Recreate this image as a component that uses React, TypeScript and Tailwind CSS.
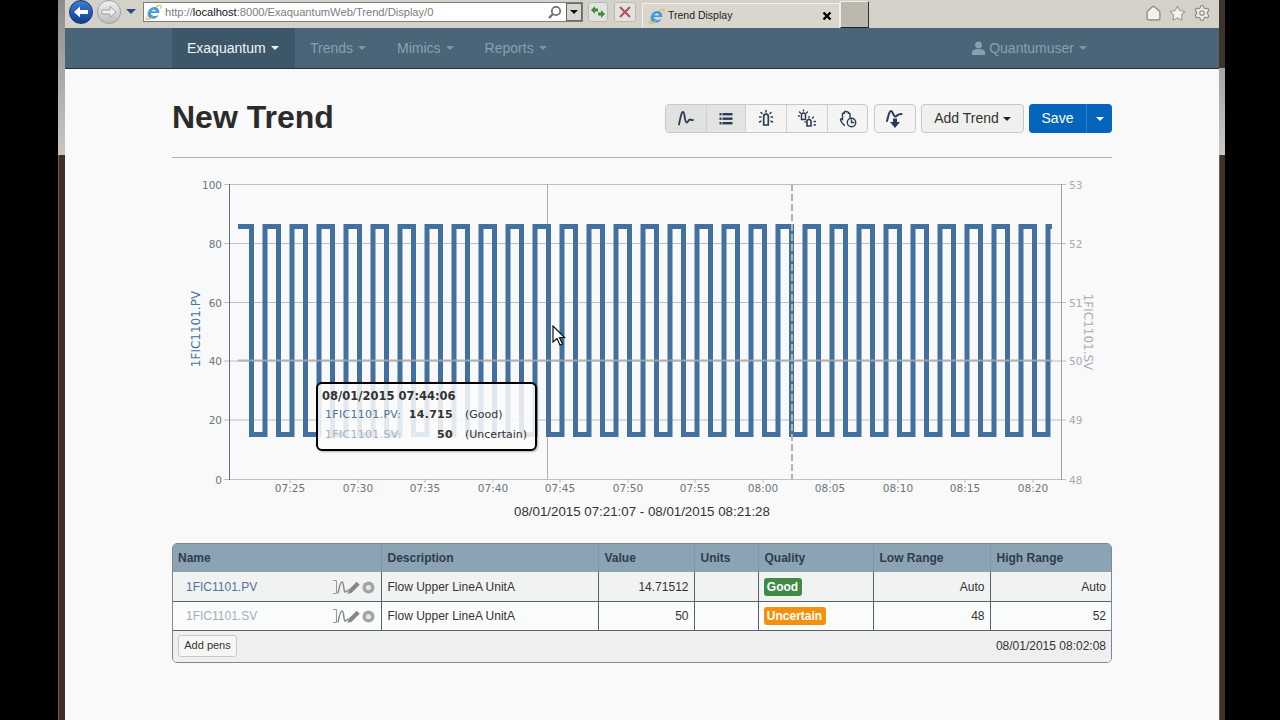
import React from "react";
import { House, Star, Settings } from "lucide-react";

const Caret = ({ className = "" }: { className?: string }) => (
  <span className={`inline-block w-0 h-0 border-x-[4px] border-x-transparent border-t-[4px] ${className}`} />
);

const Strip = ({ side }: { side: "l" | "r" }) => (
  <div className="w-full h-full flex flex-col">
    {side === "r" && <div className="h-[68px] bg-[#3f342c]" />}
    <div className={side === "l" ? "h-[155px] bg-gradient-to-b from-[#8f8c8c] to-[#c9c6c2]" : "h-[87px] bg-gradient-to-b from-[#a8a5a2] to-[#c9c6c2]"} />
    <div className="flex-1 bg-[#3f2f24] border-l border-[#6e6052]" />
  </div>
);

const IeLogo = ({ size = 16 }: { size?: number }) => (
  <svg width={size} height={size} viewBox="0 0 20 20" fill="none">
    <path d="M3 12.500C3 7 7 3.500 11 3.500s6 3 6 7H7c0 3.500 5 5 9 2-1.500 4-5 5.500-8 4.500C5 16.500 3 15 3 12.500Z" fill="#4a9bd8" />
    <path d="M7.500 8.500h5.500c-.5-2.500-4.500-2.500-5.500 0Z" fill="#f4f6f4" />
    <path d="M2 15C0 19 4 19 9 15.500M13 3.500C17 .5 20 1 18.500 5.500" stroke="#e8b93c" strokeWidth="1.400" />
  </svg>
);

const BrowserBar = () => (
  <div className="h-[28px] shrink-0 bg-[#d3d1c8] flex items-start relative">
    <div className="w-[4px]" />
    <div className="w-[24px] h-[24px] rounded-full bg-gradient-to-b from-[#3c7ed0] to-[#103f92] border border-[#17386e] flex items-center justify-center">
      <svg width="16" height="14" viewBox="0 0 16 14"><path d="M1 7 7 1.500V5h8v4H7v3.500Z" fill="#fff" /></svg>
    </div>
    <div className="ml-[4px] w-[24px] h-[24px] rounded-full bg-gradient-to-b from-[#f0f1ee] to-[#b9bec0] border border-[#9aa0a2] flex items-center justify-center">
      <svg width="16" height="14" viewBox="0 0 16 14"><path d="M15 7 9 1.500V5H1v4h8v3.500Z" fill="#eef0ee" stroke="#9aa3a8" /></svg>
    </div>
    <div className="ml-[5px] mt-[9px] flex"><Caret className="border-t-[#234e86] border-x-[5px] border-t-[5px]" /></div>
    <div className="ml-[7px] mt-[2px] w-[440px] h-[20px] bg-white border border-[#7e7e78] flex items-center pl-[1px]">
      <IeLogo size={17} />
      <span className="ml-[3px] text-[11.200px] tracking-[-0.03px] text-[#7d7d7d] font-['Liberation_Sans',sans-serif] whitespace-nowrap">
        http://<span className="text-[#111]">localhost</span>:8000/ExaquantumWeb/Trend/Display/0
      </span>
      <div className="ml-auto mr-[4px] text-[#777]">
        <svg width="15" height="15" viewBox="0 0 15 15" fill="none" stroke="#6f7272" strokeWidth="1.800"><circle cx="9" cy="6" r="4.200" /><path d="M6 9 2 13" strokeWidth="2.400" /></svg>
      </div>
      <div className="w-[16px] h-[18px] bg-[#d6d5cf] border border-[#666] flex items-center justify-center"><Caret className="border-t-[#111]" /></div>
    </div>
    <div className="ml-[5px] mt-[2px] w-[20px] h-[20px] rounded-[3px] bg-[#e2e3dc] border border-[#bbb] flex items-center justify-center">
      <svg width="16" height="14" viewBox="0 0 16 14"><path d="M1 5 5 1v2.500h3v3H5V9ZM15 9l-4 4v-2.500H8v-3h3V5Z" fill="#3c8c3c" /></svg>
    </div>
    <div className="ml-[6px] mt-[2px] w-[22px] h-[20px] rounded-[3px] bg-[#e2e3dc] border border-[#bbb] flex items-center justify-center">
      <svg width="12" height="12" viewBox="0 0 12 12"><path d="M1 1l10 10M11 1 1 11" stroke="#b5525a" strokeWidth="2.200" /></svg>
    </div>
    <div className="ml-[6px] mt-[3px] w-[198px] h-[25px] bg-[#d9d7cd] border-t border-x border-[#f1f0ea] flex items-center pl-[5px]">
      <IeLogo size={17} />
      <span className="ml-[3px] text-[10.500px] text-[#222] font-['Liberation_Sans',sans-serif] whitespace-nowrap">Trend Display</span>
      <svg className="ml-auto mr-[7px]" width="10" height="10" viewBox="0 0 10 10"><path d="M1.500 1.500l7 7M8.500 1.500l-7 7" stroke="#000" strokeWidth="2.400" /></svg>
    </div>
    <div className="mt-[1px] w-[29px] h-[27px] bg-[#bdb8ae] border border-[#eee] border-b-[#222] border-r-[#333]" />
    <div className="ml-auto flex items-center mt-[4px] mr-[8px] gap-[7px]">
      <House size={17} className="text-[#85857e] fill-[#f3f2ec]" strokeWidth={1.700} />
      <Star size={17} className="text-[#9a9a92] fill-[#f5f4ee]" strokeWidth={1.500} />
      <Settings size={18} className="text-[#8a8a84] fill-[#ecebe4]" strokeWidth={1.500} />
    </div>
  </div>
);

const NavItem = ({ label, active }: { label: string; active?: boolean }) => (
  <div className={`h-full flex items-center gap-[5px] px-[15px] text-[14px] ${active ? "bg-[#3c5769] text-[#f0f4f6]" : "text-[#8ba0ae]"}`}>
    {label}
    <Caret className={active ? "border-t-[#f0f4f6]" : "border-t-[#7f95a3]"} />
  </div>
);

const NavBar = () => (
  <div className="h-[41px] shrink-0 bg-[#4a6578] border-b border-[#24313a] flex pl-[107px] pr-[132px] font-['Liberation_Sans',sans-serif]">
    <div className="w-[123px] h-full"><NavItem label="Exaquantum" active /></div>
    <NavItem label="Trends" />
    <div className="ml-[1px]"><NavItem label="Mimics" /></div>
    <div className="ml-[1px]"><NavItem label="Reports" /></div>
    <div className="ml-auto flex items-center gap-[4px] text-[14px] text-[#8ba0ae]">
      <svg width="13" height="14" viewBox="0 0 13 14" fill="#8ba0ae"><circle cx="6.500" cy="4" r="3.400" /><path d="M0 14v-2.500C0 9 3 8 6.500 8s6.500 1 6.500 3.500V14Z" /></svg>
      <span>Quantumuser</span>
      <Caret className="ml-[1px] border-t-[#7f95a3]" />
    </div>
  </div>
);

const ic = { fill: "none", stroke: "#2b3a58", strokeWidth: 1.500, strokeLinecap: "round" as const };

const TrendIcon = () => (
  <svg width="20" height="20" viewBox="0 0 20 20" {...ic}><path d="M3 15.500C4.500 8 5.500 3 7 3c2 0 1.500 10 3.500 10.500 1.500.4 2-3 3.500-3 1 0 2 1 3 .5" strokeWidth="1.800" /></svg>
);
const ListIcon = () => (
  <svg width="20" height="20" viewBox="0 0 20 20" fill="#2b3a58">
    <rect x="3.500" y="4" width="13" height="2.400" /><rect x="3.500" y="8.500" width="13" height="2.400" /><rect x="3.500" y="13" width="13" height="2.400" />
    <rect x="5.500" y="4" width="1" height="11.500" fill="#e2e4e1" />
  </svg>
);
const LampIcon = () => (
  <svg width="20" height="20" viewBox="0 0 20 20" {...ic}>
    <path d="M7.700 16V7.500a2.300 2.300 0 0 1 4.600 0V16Z" strokeWidth="1.700" /><path d="M10 1.500v1.500M5 3.500l1 1M15 3.500l-1 1M3.500 8h1.500M15 8h1.500M3.500 13l1.500-.8M16.500 13l-1.500-.8" />
  </svg>
);
const LampsIcon = () => (
  <svg width="20" height="20" viewBox="0 0 20 20" {...ic} strokeWidth={1.300}>
    <path d="M10 17v-4.500a2 2 0 0 1 4 0V17Z" strokeWidth="1.600" />
    <path d="M4.500 10.500V6a2 2 0 0 1 4 0v4.500Z" strokeWidth="1.500" />
    <path d="M6.500 1v1M2.500 3l1 1M10.500 3l-1 1M1.500 7h1M12 7.500v1.500M16.500 8l-1 1M17 12.500h1.500M17 16h1.500M8.500 13H8" />
  </svg>
);
const HandIcon = () => (
  <svg width="20" height="20" viewBox="0 0 20 20" {...ic} strokeWidth={1.400}>
    <path d="M6.500 16.500C4 14 2.500 11.500 2.500 10.500c0-1 1.200-1 2-.2V5c0-1.300 1.800-1.300 1.900 0V3.200c0-1.300 1.900-1.300 2 0V3.500c0-1.200 1.800-1.200 1.900 0V5c0-1 1.700-1 1.700 0v3.500" />
    <circle cx="13.500" cy="13.500" r="4.200" fill="#f4f5f3" /><path d="M13.500 11v2.500h2.200" />
  </svg>
);
const TrendDownIcon = () => (
  <svg width="20" height="20" viewBox="0 0 20 20" {...ic}>
    <path d="M2 12C3.500 6 4.500 2 6 2c2 0 2 5 4 5.500 1.500.3 3-3 6.500-2.500" strokeWidth="2" />
    <path d="M8 9.500h4v3.500h3L10 19l-5-6h3Z" fill="#2b3a58" stroke="none" />
  </svg>
);

const groupBtn = "h-full flex items-center justify-center border-r border-[#cfd2cf]";

const Toolbar = () => (
  <div className="flex items-start h-[29px]">
    <div className="h-[29px] w-[203px] flex border border-[#c6c9c7] rounded-[4px] bg-[#f4f5f3] overflow-hidden">
      <div className={`${groupBtn} w-[41px] bg-[#dfe2df]`}><TrendIcon /></div>
      <div className={`${groupBtn} w-[39px] bg-[#e2e4e1]`}><ListIcon /></div>
      <div className={`${groupBtn} w-[41px]`}><LampIcon /></div>
      <div className={`${groupBtn} w-[41px]`}><LampsIcon /></div>
      <div className="h-full flex-1 flex items-center justify-center"><HandIcon /></div>
    </div>
    <div className="ml-[6px] h-[29px] w-[42px] flex items-center justify-center border border-[#c6c9c7] rounded-[4px] bg-[#f4f5f3]"><TrendDownIcon /></div>
    <div className="ml-[5px] h-[29px] w-[103px] flex items-center justify-center gap-[4px] border border-[#c6c9c7] rounded-[4px] bg-[#f0f1ef] text-[14px] text-[#333]">
      Add Trend <Caret className="border-t-[#222]" />
    </div>
    <div className="ml-[5px] h-[29px] w-[83px] flex rounded-[4px] bg-[#0565bd] text-white text-[14px] overflow-hidden">
      <div className="w-[58px] flex items-center justify-center border-r border-[#2f7fc8]">Save</div>
      <div className="flex-1 flex items-center justify-center"><Caret className="border-t-white" /></div>
    </div>
  </div>
);

const wave = () => {
  let d = "M238 226.500H251.500V434.500";
  for (let k = 0; k < 30; k++) {
    const rise = 265 + 27 * k;
    d += `H${rise}V226.500`;
    if (k < 29) d += `H${rise + 13.500}V434.500`;
  }
  return d + "H1052";
};

const yLeft: [string, number][] = [["100", 184.5], ["80", 243.5], ["60", 302.5], ["40", 361], ["20", 420], ["0", 479.5]];
const yRight: [string, number][] = [["53", 184.5], ["52", 243.5], ["51", 302.5], ["50", 361], ["49", 420], ["48", 479.5]];
const xTicks: [string, number][] = [["07:25", 290], ["07:30", 358], ["07:35", 425], ["07:40", 493], ["07:45", 560], ["07:50", 628], ["07:55", 695], ["08:00", 763], ["08:05", 830], ["08:10", 898], ["08:15", 965], ["08:20", 1033]];

const Chart = () => (
  <div className="relative h-[325px] mt-[17px] font-['DejaVu_Sans',sans-serif]">
    <svg width="940" height="325" viewBox="172 175 940 325" className="block">
      {yLeft.map(([, y]) => <line key={y} x1="224" x2="1066" y1={y} y2={y} stroke="#bcc0c0" strokeWidth="1" />)}
      <line x1="229.500" x2="229.500" y1="184" y2="480" stroke="#5e6f7e" />
      <line x1="1061.500" x2="1061.500" y1="184" y2="480" stroke="#999fa3" />
      {xTicks.map(([, x]) => <line key={x} x1={x} x2={x} y1="479" y2="483" stroke="#bbb" />)}
      <line x1="547.500" x2="547.500" y1="184" y2="479" stroke="#aeb0b0" />
      <path d={wave()} fill="none" stroke="#42709f" strokeWidth="5" />
      <line x1="238" x2="1052" y1="360.500" y2="360.500" stroke="#a9abab" strokeWidth="2.200" strokeOpacity="0.85" />
      <line x1="792" x2="792" y1="184" y2="479" stroke="#b0b3b3" strokeWidth="2" strokeDasharray="7 3" />
      <g fontSize="10.500" fill="#6a7580" textAnchor="end">
        {yLeft.map(([t, y]) => <text key={t} x="222" y={y + 4}>{t}</text>)}
      </g>
      <g fontSize="10.500" fill="#a5abb3">
        {yRight.map(([t, y]) => <text key={t} x="1069" y={y + 4}>{t}</text>)}
      </g>
      <g fontSize="10.500" fill="#6a7580" textAnchor="middle">
        {xTicks.map(([t, x]) => <text key={t} x={x} y="492">{t}</text>)}
      </g>
      <text transform="translate(200 329) rotate(-90)" textAnchor="middle" fontSize="12" fill="#4474a4">1FIC1101.PV</text>
      <text transform="translate(1084 332) rotate(90)" textAnchor="middle" fontSize="12" fill="#a4acbc">1FIC1101.SV</text>
    </svg>
    <div className="absolute left-[144px] top-[207px] w-[221px] h-[69px] rounded-[6px] border-2 border-black bg-[#fbfbfb]/[0.86] shadow-[1px_1px_2px_rgba(0,0,0,0.3)] text-[11px] text-[#333] pl-[4px] pt-[4px]">
      <div className="font-bold text-[11.500px] leading-[17px]">08/01/2015 07:44:06</div>
      <div className="flex leading-[20px] pl-[3px] tracking-[0.3px]">
        <span className="w-[79px] text-[#4f729b] text-[11px] whitespace-nowrap">1FIC1101.PV:</span>
        <span className="w-[49px] text-right font-bold">14.715</span>
        <span className="ml-[12px] tracking-normal">(Good)</span>
      </div>
      <div className="flex leading-[20px] pl-[3px] tracking-[0.3px]">
        <span className="w-[79px] text-[#aab0bb] text-[11px] whitespace-nowrap">1FIC1101.SV:</span>
        <span className="w-[49px] text-right font-bold">50</span>
        <span className="ml-[12px] tracking-normal">(Uncertain)</span>
      </div>
    </div>
    <svg className="absolute left-[380px] top-[150px]" width="14" height="22" viewBox="0 0 14 22">
      <path d="M1 1v16l4-3.500 3 6.500 2.500-1-3-6.500H12.500Z" fill="#fff" stroke="#111" strokeWidth="1.200" />
    </svg>
  </div>
);

const PenIcons = () => (
  <svg width="44" height="16" viewBox="0 0 44 16" fill="none" className="shrink-0">
    <path d="M1 1.500H4.500V14.500H1" stroke="#999" strokeWidth="1" />
    <path d="M6 14.500C7.500 6 8.500 3 10 3c2 0 1.500 9 3 10 1 .5 2-2 3.500-2" stroke="#868b92" strokeWidth="1.500" />
    <path d="M15.500 15l1.200-4.200 8-8 3 3-8 8Z" fill="#868686" />
    <circle cx="36.500" cy="8.500" r="6" fill="#a2a5a7" />
    <circle cx="36.500" cy="8.500" r="2.600" fill="#e6e6e6" />
  </svg>
);

const Th = ({ children, first }: { children: React.ReactNode; first?: boolean }) => (
  <th className={`text-left font-bold text-[12px] text-[#2f3d4a] pr-[5px] border-r border-[#7b96a8] last:border-r-0 ${first ? "pl-[5px]" : "pl-[6px]"}`}>{children}</th>
);
const Td = ({ children, right }: { children?: React.ReactNode; right?: boolean }) => (
  <td className={`text-[12px] text-[#333] border-r border-[#55636f] last:border-r-0 ${right ? "text-right pl-[5px] pr-[5px]" : "text-left pl-[6px] pr-[5px]"}`}>{children}</td>
);

const rows = [
  { name: "1FIC1101.PV", nameCls: "text-[#557393]", bg: "bg-[#f1f2f2] [&>td]:pt-[1px]", value: "14.71512", q: "Good", qCls: "bg-[#3f8a45] w-[38px]", lo: "Auto", hi: "Auto" },
  { name: "1FIC1101.SV", nameCls: "text-[#a4adb8]", bg: "bg-[#fafbfb]", value: "50", q: "Uncertain", qCls: "bg-[#f5900f] w-[62px]", lo: "48", hi: "52" },
];

const PenTable = () => (
  <div className="border border-[#78899a] rounded-[5px] overflow-hidden">
    <table className="w-full table-fixed border-collapse">
      <colgroup>
        <col className="w-[208px]" /><col className="w-[217px]" /><col className="w-[96px]" /><col className="w-[64px]" /><col className="w-[115px]" /><col className="w-[117px]" /><col className="w-[121px]" />
      </colgroup>
      <thead>
        <tr className="h-[28px] bg-[#8ba3b3]">
          <Th first>Name</Th><Th>Description</Th><Th>Value</Th><Th>Units</Th><Th>Quality</Th><Th>Low Range</Th><Th>High Range</Th>
        </tr>
      </thead>
      <tbody>
        {rows.map((r) => (
          <tr key={r.name} className={`h-[29px] border-b border-[#55636f] ${r.bg}`}>
            <td className="px-[5px] border-r border-[#55636f]">
              <div className="flex items-center justify-between pl-[8px]">
                <span className={`text-[12px] ${r.nameCls}`}>{r.name}</span>
                <PenIcons />
              </div>
            </td>
            <Td>Flow Upper LineA UnitA</Td>
            <Td right>{r.value}</Td>
            <Td />
            <td className="pl-[5px] pr-[5px] border-r border-[#55636f] !pt-0">
              <span className={`inline-flex items-center justify-center h-[18px] rounded-[3px] text-white font-bold text-[12px] align-middle ${r.qCls}`}>{r.q}</span>
            </td>
            <Td right>{r.lo}</Td>
            <Td right>{r.hi}</Td>
          </tr>
        ))}
      </tbody>
    </table>
    <div className="h-[31px] bg-[#efefef] flex items-center justify-between pl-[5px] pr-[5px] pb-[1px] text-[12px] text-[#333]">
      <div className="h-[22px] w-[59px] flex items-center justify-center bg-[#f6f6f5] border border-[#c9c9c9] rounded-[3px] text-[11px]">Add pens</div>
      <span>08/01/2015 08:02:08</span>
    </div>
  </div>
);

export default function App() {
  return (
    <div className="w-[1280px] h-[720px] bg-black flex overflow-hidden font-['Liberation_Sans',sans-serif]">
      <div className="w-[58px] shrink-0" />
      <div className="w-[7px] shrink-0"><Strip side="l" /></div>
      <div className="w-[1154px] shrink-0 flex flex-col bg-[#f8f9f8]">
        <BrowserBar />
        <NavBar />
        <div className="px-[107px] flex flex-col">
          <div className="h-[89px] border-b border-[#b0b2b0] flex justify-between items-start pt-[35px]">
            <h1 className="text-[32px] leading-[26px] font-bold text-[#2b2b2b]">New Trend</h1>
            <Toolbar />
          </div>
          <Chart />
          <div className="h-[24px] flex items-center justify-center text-[13.300px] text-[#333]">08/01/2015 07:21:07 - 08/01/2015 08:21:28</div>
          <div className="mt-[19px]"><PenTable /></div>
        </div>
      </div>
      <div className="w-[6px] shrink-0"><Strip side="r" /></div>
    </div>
  );
}
